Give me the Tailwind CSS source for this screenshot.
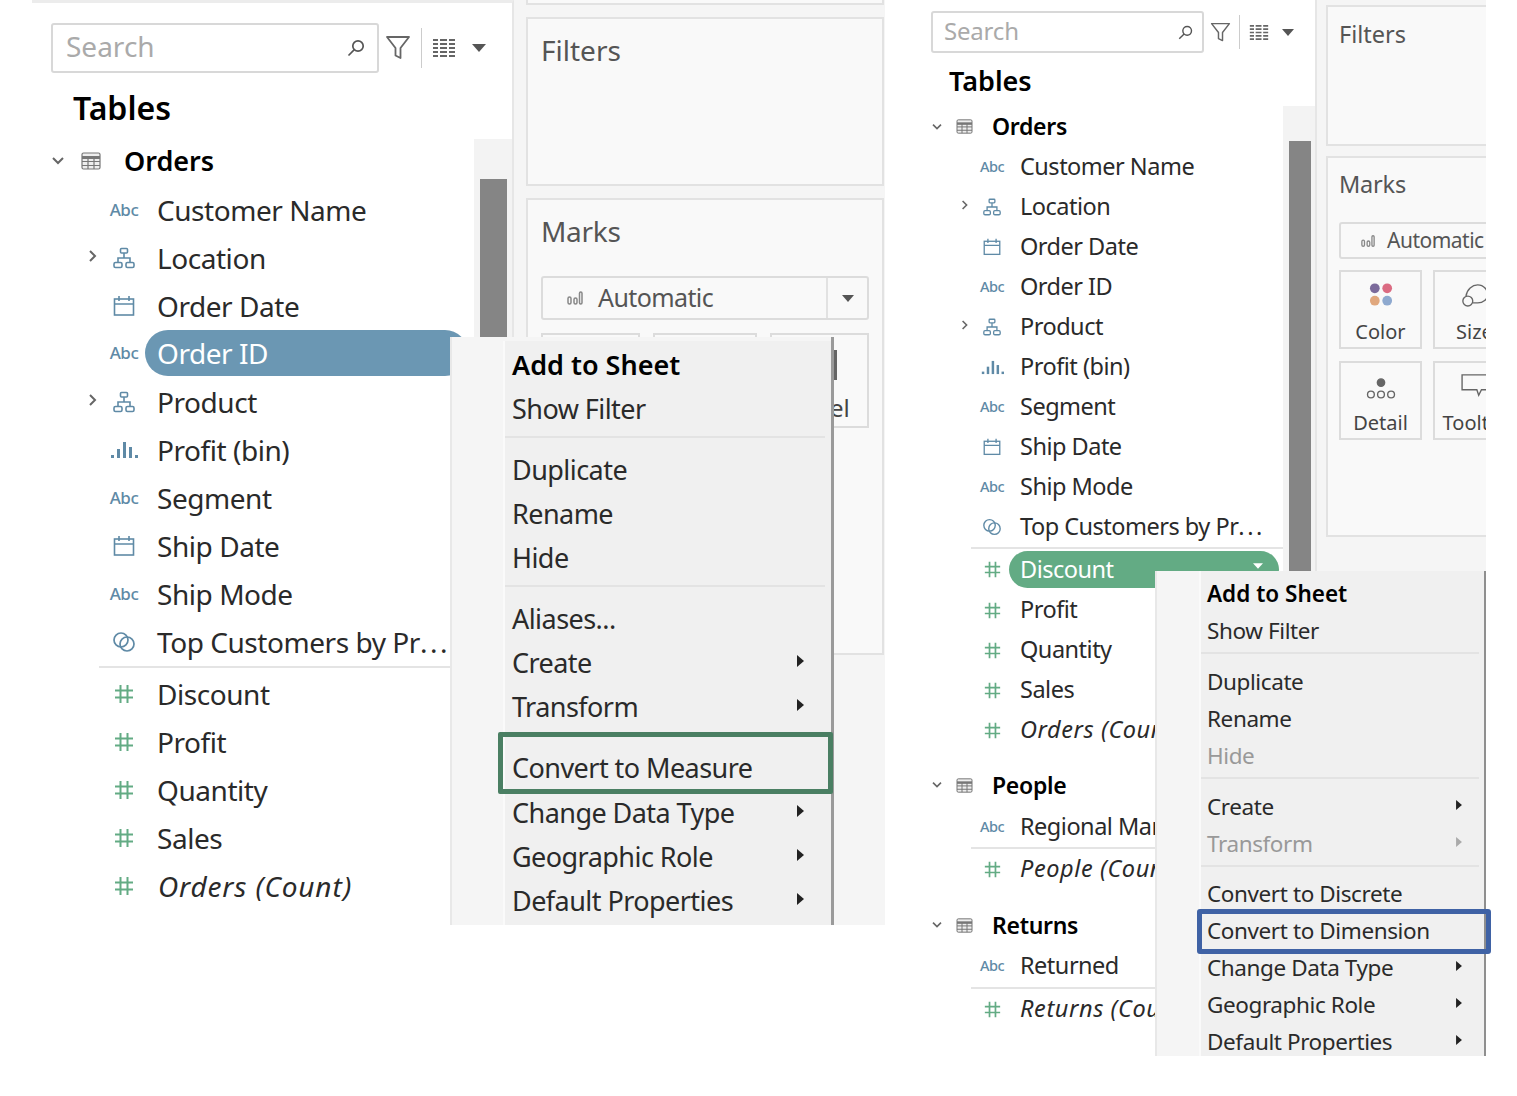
<!DOCTYPE html>
<html lang="en">
<head>
    <meta charset="UTF-8">
    <meta name="viewport" content="width=device-width, initial-scale=1.0">
    <title>Tableau data pane</title>
    <script src="https://cdn.jsdelivr.net/npm/@tailwindcss/browser@4"></script>
</head>
<body class="bg-white font-['Noto_Sans','Open_Sans',sans-serif] text-[#2a2a2a]">
<svg class="hidden">
    <symbol id="hier" viewBox="0 0 22 22" fill="none" stroke="currentColor" stroke-width="1.6"><rect x="7.5" y="1.5" width="7" height="4.5" rx="1"/><rect x="1" y="15.5" width="8" height="5" rx="1.5"/><rect x="13" y="15.5" width="8" height="5" rx="1.5"/><path d="M11 6v5M5 15v-4h12v4"/></symbol>
    <symbol id="cal" viewBox="0 0 22 22" fill="none" stroke="currentColor" stroke-width="1.6"><rect x="1.5" y="4" width="19" height="16"/><path d="M1.5 9h19M6 1v5M16 1v5"/></symbol>
    <symbol id="bins" viewBox="0 0 28 20" fill="currentColor"><rect x="1" y="15" width="3" height="3"/><rect x="7" y="9" width="3" height="9"/><rect x="13" y="2" width="3" height="16"/><rect x="19" y="7" width="3" height="11"/><rect x="25" y="15" width="3" height="3"/></symbol>
    <symbol id="sets" viewBox="0 0 24 22" fill="none" stroke="currentColor" stroke-width="1.7"><circle cx="9" cy="9" r="7"/><circle cx="15" cy="13" r="7"/></symbol>
    <symbol id="hash" viewBox="0 0 20 20" fill="none" stroke="currentColor" stroke-width="2"><path d="M6.5 1v18M13.5 1v18M1 6.5h18M1 13.5h18"/></symbol>
    <symbol id="table" viewBox="0 0 20 18" fill="none" stroke="#777" stroke-width="1.2"><rect x="1" y="1" width="18" height="16" rx="1.5" fill="#eee"/><path d="M1 5.5h18" stroke-width="3"/><path d="M1 9.5h18M1 13.5h18M7 5v12M13 5v12"/></symbol>
    <symbol id="down" viewBox="0 0 14 10" fill="none" stroke="#666" stroke-width="2"><path d="M2 2l5 5 5-5"/></symbol>
    <symbol id="right" viewBox="0 0 10 14" fill="none" stroke="#666" stroke-width="2"><path d="M2 2l5 5-5 5"/></symbol>
    <symbol id="search" viewBox="0 0 18 18" fill="none" stroke="#555" stroke-width="1.7"><circle cx="11" cy="7" r="5.2"/><path d="M7.3 10.7L1.5 16.5"/></symbol>
    <symbol id="funnel" viewBox="0 0 26 26" fill="none" stroke="#666" stroke-width="1.8" stroke-linejoin="round"><path d="M2 2h22l-8.5 11v10l-5-2.5V13z"/></symbol>
    <symbol id="list" viewBox="0 0 24 20" fill="#666"><path d="M1 1h5v2H1zM8 1h7v2H8zM17 1h6v2h-6zM1 5h5v2H1zM8 5h7v2H8zM17 5h6v2h-6zM1 9h5v2H1zM8 9h7v2H8zM17 9h6v2h-6zM1 13h5v2H1zM8 13h7v2H8zM17 13h6v2h-6zM1 17h5v2H1zM8 17h7v2H8zM17 17h6v2h-6z"/></symbol>
    <symbol id="caret" viewBox="0 0 14 8" fill="currentColor"><path d="M0 0h14L7 8z"/></symbol>
    <symbol id="marks" viewBox="0 0 16 16" fill="none" stroke="#888" stroke-width="1.5"><rect x="1" y="7" width="3" height="7" rx="1.5"/><rect x="7" y="8" width="3" height="6" rx="1.5"/><rect x="12.5" y="2" width="2.5" height="12" rx="1.2"/></symbol>
    <symbol id="arrow" viewBox="0 0 7 12" fill="currentColor"><path d="M0 0l7 6-7 6z"/></symbol>
    <symbol id="dots" viewBox="0 0 26 26"><circle cx="6" cy="6" r="5.5" fill="#7b6a9b"/><circle cx="20" cy="6" r="5.5" fill="#db6b82"/><circle cx="6" cy="20" r="5.5" fill="#e0a77d"/><circle cx="20" cy="20" r="5.5" fill="#8ea9cf"/></symbol>
    <symbol id="detail" viewBox="0 0 32 24" fill="none" stroke="#666" stroke-width="1.5"><circle cx="16" cy="5" r="4" fill="#666"/><circle cx="5" cy="18" r="3.7"/><circle cx="16" cy="18" r="3.7"/><circle cx="27" cy="18" r="3.7"/></symbol>
    <symbol id="size" viewBox="0 0 30 30" fill="none" stroke="#666" stroke-width="1.5"><circle cx="7" cy="20" r="5.5"/><path d="M5 14.500C6 7 12 2 18 2c7 0 11 6 11 11s-5 9-11 9h-5.500"/></symbol>
    <symbol id="tip" viewBox="0 0 30 26" fill="none" stroke="#666" stroke-width="1.5"><path d="M1 1h28v16H22l-3 6-2-6H1z"/></symbol>
</svg>

<main class="relative w-[1517px] h-[1096px] overflow-hidden">

    <!-- left shot: Order ID -> Convert to Measure -->
    <section class="absolute left-[32px] top-0 w-[853px] h-[925px] flex">
        <div class="w-[483px] h-full flex flex-col overflow-hidden border-t-[3px] border-[#ececec] border-r-[2px] border-r-[#e6e6e6]">
            <div class="h-[136px] shrink-0">
                <div class="flex items-center h-[50px] mt-[20px] ml-[19px]">
                    <div class="w-[328px] h-[50px] border-2 border-[#d8d8d8] rounded-[3px] flex items-center justify-between pl-[13px] pr-[12px]">
                        <span class="text-[28px] text-[#aaa] -mt-[4px]">Search</span>
                        <svg class="w-[18px] h-[18px]"><use href="#search"/></svg>
                    </div>
                    <svg class="w-[26px] h-[26px] ml-[6px]"><use href="#funnel"/></svg>
                    <span class="w-px h-[40px] bg-[#ccc] ml-[10px]"></span>
                    <svg class="w-[24px] h-[20px] ml-[10px]"><use href="#list"/></svg>
                    <svg class="w-[14px] h-[8px] ml-[16px] text-[#555]"><use href="#caret"/></svg>
                </div>
                <div class="ml-[41px] mt-[13px] text-[32px] leading-[44px] font-semibold text-black">Tables</div>
            </div>
            <div class="flex flex-1 min-h-0">
                <div class="w-[442px] shrink-0 text-[28px] tracking-[-0.45px]">
                    <div class="flex items-center h-[44px] mb-[3px] pl-[19px]">
                        <svg class="w-[14px] h-[10px]"><use href="#down"/></svg>
                        <svg class="w-[20px] h-[18px] ml-[16px]"><use href="#table"/></svg>
                        <span class="ml-[23px] font-semibold text-[27px] tracking-normal text-black">Orders</span>
                    </div>
                    <div class="flex items-center h-[48px] pl-[50px]"><span class="w-[24px]"></span><span class="w-[36px] text-center text-[17px] font-medium text-[#5f8aa6]">Abc</span><span class="ml-[15px]">Customer Name</span></div>
                    <div class="flex items-center h-[48px] pl-[50px]"><svg class="w-[10px] h-[14px] ml-[6px] mr-[8px] -mt-[4px]"><use href="#right"/></svg><span class="w-[36px] flex justify-center text-[#5f8aa6]"><svg class="w-[22px] h-[22px]"><use href="#hier"/></svg></span><span class="ml-[15px]">Location</span></div>
                    <div class="flex items-center h-[48px] pl-[50px]"><span class="w-[24px]"></span><span class="w-[36px] flex justify-center text-[#5f8aa6]"><svg class="w-[22px] h-[22px]"><use href="#cal"/></svg></span><span class="ml-[15px]">Order Date</span></div>
                    <div class="flex items-center h-[46px] mb-[2px] pl-[50px]"><span class="w-[24px]"></span><span class="w-[36px] text-center text-[17px] font-medium text-[#5f8aa6]">Abc</span><span class="ml-[3px] pl-[12px] w-[323px] shrink-0 h-[46px] leading-[46px] rounded-full bg-[#6b97b3] text-white">Order ID</span></div>
                    <div class="flex items-center h-[48px] pl-[50px]"><svg class="w-[10px] h-[14px] ml-[6px] mr-[8px] -mt-[4px]"><use href="#right"/></svg><span class="w-[36px] flex justify-center text-[#5f8aa6]"><svg class="w-[22px] h-[22px]"><use href="#hier"/></svg></span><span class="ml-[15px]">Product</span></div>
                    <div class="flex items-center h-[48px] pl-[50px]"><span class="w-[24px]"></span><span class="w-[36px] flex justify-center text-[#5f8aa6]"><svg class="w-[28px] h-[20px]"><use href="#bins"/></svg></span><span class="ml-[15px]">Profit (bin)</span></div>
                    <div class="flex items-center h-[48px] pl-[50px]"><span class="w-[24px]"></span><span class="w-[36px] text-center text-[17px] font-medium text-[#5f8aa6]">Abc</span><span class="ml-[15px]">Segment</span></div>
                    <div class="flex items-center h-[48px] pl-[50px]"><span class="w-[24px]"></span><span class="w-[36px] flex justify-center text-[#5f8aa6]"><svg class="w-[22px] h-[22px]"><use href="#cal"/></svg></span><span class="ml-[15px]">Ship Date</span></div>
                    <div class="flex items-center h-[48px] pl-[50px]"><span class="w-[24px]"></span><span class="w-[36px] text-center text-[17px] font-medium text-[#5f8aa6]">Abc</span><span class="ml-[15px]">Ship Mode</span></div>
                    <div class="flex items-center h-[48px] pl-[50px]"><span class="w-[24px]"></span><span class="w-[36px] flex justify-center text-[#5f8aa6]"><svg class="w-[24px] h-[22px]"><use href="#sets"/></svg></span><span class="ml-[15px] whitespace-nowrap">Top Customers by Pr<span class="tracking-[2.500px]">...</span></span></div>
                    <div class="h-[2px] ml-[67px] mb-[2px] bg-[#e4e4e4]"></div>
                    <div class="flex items-center h-[48px] pl-[50px]"><span class="w-[24px]"></span><span class="w-[36px] flex justify-center text-[#63ab84]"><svg class="w-[20px] h-[20px]"><use href="#hash"/></svg></span><span class="ml-[15px]">Discount</span></div>
                    <div class="flex items-center h-[48px] pl-[50px]"><span class="w-[24px]"></span><span class="w-[36px] flex justify-center text-[#63ab84]"><svg class="w-[20px] h-[20px]"><use href="#hash"/></svg></span><span class="ml-[15px]">Profit</span></div>
                    <div class="flex items-center h-[48px] pl-[50px]"><span class="w-[24px]"></span><span class="w-[36px] flex justify-center text-[#63ab84]"><svg class="w-[20px] h-[20px]"><use href="#hash"/></svg></span><span class="ml-[15px]">Quantity</span></div>
                    <div class="flex items-center h-[48px] pl-[50px]"><span class="w-[24px]"></span><span class="w-[36px] flex justify-center text-[#63ab84]"><svg class="w-[20px] h-[20px]"><use href="#hash"/></svg></span><span class="ml-[15px]">Sales</span></div>
                    <div class="flex items-center h-[48px] pl-[50px]"><span class="w-[24px]"></span><span class="w-[36px] flex justify-center text-[#63ab84]"><svg class="w-[20px] h-[20px]"><use href="#hash"/></svg></span><span class="ml-[16px] italic tracking-[0.850px]">Orders (Count)</span></div>
                </div>
                <div class="w-[39px] bg-[#f3f3f3] pt-[40px] pl-[6px]"><div class="w-[27px] h-[170px] bg-[#858585]"></div></div>
            </div>
        </div>
        <div class="flex-1 bg-[#f5f5f5] pl-[12px] pr-px flex flex-col">
            <div class="h-[5px] border-2 border-t-0 border-[#e2e2e2] bg-[#f9f9f9]"></div>
            <div class="h-[169px] mt-[12px] border-2 border-[#e2e2e2] bg-[#f9f9f9] px-[13px] pt-[10px] text-[28px] text-[#555]">Filters</div>
            <div class="h-[457px] mt-[12px] border-2 border-[#e2e2e2] bg-[#f9f9f9] px-[13px] pt-[10px]">
                <div class="text-[28px] tracking-[-0.3px] text-[#555]">Marks</div>
                <div class="flex items-center h-[44px] mt-[24px] border-2 border-[#dcdcdc] rounded-[3px] text-[25px] tracking-[-0.6px] text-[#555]">
                    <svg class="w-[16px] h-[16px] ml-[24px]"><use href="#marks"/></svg>
                    <span class="ml-[15px] flex-1">Automatic</span>
                    <span class="w-[41px] h-full border-l-2 border-[#e2e2e2] flex items-center justify-center"><svg class="w-[12px] h-[7px] text-[#555]"><use href="#caret"/></svg></span>
                </div>
                <div class="grid grid-cols-[99px_104px_99px] gap-[13px] mt-[13px]">
                    <div class="h-[95px] border-2 border-[#dcdcdc]"></div>
                    <div class="h-[95px] border-2 border-[#dcdcdc]"></div>
                    <div class="h-[95px] border-2 border-[#dcdcdc] flex flex-col items-center justify-end text-[24px] text-[#444]">
                        <span class="absolute left-[800px] top-[350px] w-[5px] h-[30px] bg-[#666]"></span>
                        Label
                    </div>
                </div>
            </div>
        </div>

        <div class="absolute left-[418px] top-[337px] w-[384px] h-[588px] bg-[#f5f5f5] border-l-2 border-r-[3px] border-[#e8e8e8] border-r-[#9a9a9a] pt-[4px] pl-[51px] text-[27px] tracking-[-0.55px]">
            <div class="bg-[#f0f0f0] h-full pt-[2px] pr-[6px] border-l-2 border-[#fafafa]">
                <div class="flex items-center justify-between h-[44px] pl-[7px] font-semibold tracking-normal text-black">Add to Sheet</div>
                <div class="flex items-center h-[44px] pl-[7px]">Show Filter</div>
                <div class="h-[17px] pt-[5px]"><div class="h-[2px] bg-[#e3e3e3]"></div></div>
                <div class="flex items-center h-[44px] pl-[7px]">Duplicate</div>
                <div class="flex items-center h-[44px] pl-[7px]">Rename</div>
                <div class="flex items-center h-[44px] pl-[7px]">Hide</div>
                <div class="h-[17px] pt-[5px]"><div class="h-[2px] bg-[#e3e3e3]"></div></div>
                <div class="flex items-center h-[44px] pl-[7px]">Aliases...</div>
                <div class="flex items-center justify-between h-[44px] pl-[7px] pr-[21px]">Create<svg class="w-[7px] h-[12px] -mt-[4px] text-[#222]"><use href="#arrow"/></svg></div>
                <div class="flex items-center justify-between h-[44px] pl-[7px] pr-[21px]">Transform<svg class="w-[7px] h-[12px] -mt-[4px] text-[#222]"><use href="#arrow"/></svg></div>
                <div class="h-[17px]"></div>
                <div class="relative flex items-center h-[45px] pl-[7px]">Convert to Measure
                    <span class="absolute -left-[7px] -top-[14px] w-[335px] h-[62px] border-[5px] border-[#4a7f63] rounded-[2px]"></span>
                </div>
                <div class="flex items-center justify-between h-[44px] pl-[7px] pr-[21px]">Change Data Type<svg class="w-[7px] h-[12px] -mt-[4px] text-[#222]"><use href="#arrow"/></svg></div>
                <div class="flex items-center justify-between h-[44px] pl-[7px] pr-[21px]">Geographic Role<svg class="w-[7px] h-[12px] -mt-[4px] text-[#222]"><use href="#arrow"/></svg></div>
                <div class="flex items-center justify-between h-[44px] pl-[7px] pr-[21px]">Default Properties<svg class="w-[7px] h-[12px] -mt-[4px] text-[#222]"><use href="#arrow"/></svg></div>
            </div>
        </div>
    </section>

    <!-- right shot: Discount -> Convert to Dimension -->
    <section class="absolute left-[915px] top-0 w-[571px] h-[1056px] flex">
        <div class="w-[402px] h-full flex flex-col overflow-hidden border-r-[2px] border-r-[#e6e6e6]">
            <div class="h-[106px] shrink-0">
                <div class="flex items-center h-[42px] mt-[11px] ml-[16px]">
                    <div class="w-[273px] h-[42px] border-2 border-[#d8d8d8] rounded-[3px] flex items-center justify-between pl-[11px] pr-[9px]">
                        <span class="text-[24px] tracking-[-0.2px] text-[#aaa] -mt-[2px]">Search</span>
                        <svg class="w-[15px] h-[15px]"><use href="#search"/></svg>
                    </div>
                    <svg class="w-[21px] h-[21px] ml-[6px]"><use href="#funnel"/></svg>
                    <span class="w-px h-[34px] bg-[#ccc] ml-[8px]"></span>
                    <svg class="w-[20px] h-[17px] ml-[9px]"><use href="#list"/></svg>
                    <svg class="w-[12px] h-[7px] ml-[13px] text-[#555]"><use href="#caret"/></svg>
                </div>
                <div class="ml-[34px] mt-[9px] text-[27px] leading-[38px] font-semibold text-black">Tables</div>
            </div>
            <div class="flex flex-1 min-h-0">
                <div class="w-[368px] shrink-0 text-[23.500px] tracking-[-0.5px]">
                    <div class="flex items-center h-[41px] pl-[16px]">
                        <svg class="w-[12px] h-[8px]"><use href="#down"/></svg>
                        <svg class="w-[17px] h-[15px] ml-[13px]"><use href="#table"/></svg>
                        <span class="ml-[19px] font-semibold text-[23px] tracking-[-0.3px] text-black">Orders</span>
                    </div>
                    <div class="flex items-center h-[40px] pl-[40px]"><span class="w-[20px]"></span><span class="w-[34px] text-center text-[14.500px] font-medium text-[#5f8aa6]">Abc</span><span class="ml-[11px]">Customer Name</span></div>
                    <div class="flex items-center h-[40px] pl-[40px]"><svg class="w-[8px] h-[12px] ml-[6px] mr-[6px] -mt-[4px]"><use href="#right"/></svg><span class="w-[34px] flex justify-center text-[#5f8aa6]"><svg class="w-[18px] h-[18px]"><use href="#hier"/></svg></span><span class="ml-[11px]">Location</span></div>
                    <div class="flex items-center h-[40px] pl-[40px]"><span class="w-[20px]"></span><span class="w-[34px] flex justify-center text-[#5f8aa6]"><svg class="w-[18px] h-[18px]"><use href="#cal"/></svg></span><span class="ml-[11px]">Order Date</span></div>
                    <div class="flex items-center h-[40px] pl-[40px]"><span class="w-[20px]"></span><span class="w-[34px] text-center text-[14.500px] font-medium text-[#5f8aa6]">Abc</span><span class="ml-[11px]">Order ID</span></div>
                    <div class="flex items-center h-[40px] pl-[40px]"><svg class="w-[8px] h-[12px] ml-[6px] mr-[6px] -mt-[4px]"><use href="#right"/></svg><span class="w-[34px] flex justify-center text-[#5f8aa6]"><svg class="w-[18px] h-[18px]"><use href="#hier"/></svg></span><span class="ml-[11px]">Product</span></div>
                    <div class="flex items-center h-[40px] pl-[40px]"><span class="w-[20px]"></span><span class="w-[34px] flex justify-center text-[#5f8aa6]"><svg class="w-[23px] h-[17px]"><use href="#bins"/></svg></span><span class="ml-[11px]">Profit (bin)</span></div>
                    <div class="flex items-center h-[40px] pl-[40px]"><span class="w-[20px]"></span><span class="w-[34px] text-center text-[14.500px] font-medium text-[#5f8aa6]">Abc</span><span class="ml-[11px]">Segment</span></div>
                    <div class="flex items-center h-[40px] pl-[40px]"><span class="w-[20px]"></span><span class="w-[34px] flex justify-center text-[#5f8aa6]"><svg class="w-[18px] h-[18px]"><use href="#cal"/></svg></span><span class="ml-[11px]">Ship Date</span></div>
                    <div class="flex items-center h-[40px] pl-[40px]"><span class="w-[20px]"></span><span class="w-[34px] text-center text-[14.500px] font-medium text-[#5f8aa6]">Abc</span><span class="ml-[11px]">Ship Mode</span></div>
                    <div class="flex items-center h-[40px] pl-[40px]"><span class="w-[20px]"></span><span class="w-[34px] flex justify-center text-[#5f8aa6]"><svg class="w-[20px] h-[18px]"><use href="#sets"/></svg></span><span class="ml-[11px] whitespace-nowrap">Top Customers by Pr<span class="tracking-[2.500px]">...</span></span></div>
                    <div class="h-[2px] ml-[56px] bg-[#e4e4e4]"></div>
                    <div class="flex items-center h-[40px] pl-[40px]"><span class="w-[20px]"></span><span class="w-[34px] flex justify-center text-[#63ab84]"><svg class="w-[17px] h-[17px]"><use href="#hash"/></svg></span><span class="pl-[11px] pr-[16px] w-[270px] shrink-0 h-[37px] leading-[37px] rounded-full bg-[#63ab84] text-white flex items-center justify-between">Discount<svg class="w-[10px] h-[6px] -mt-[6px] text-white"><use href="#caret"/></svg></span></div>
                    <div class="flex items-center h-[40px] mt-[1px] pl-[40px]"><span class="w-[20px]"></span><span class="w-[34px] flex justify-center text-[#63ab84]"><svg class="w-[17px] h-[17px]"><use href="#hash"/></svg></span><span class="ml-[11px]">Profit</span></div>
                    <div class="flex items-center h-[40px] pl-[40px]"><span class="w-[20px]"></span><span class="w-[34px] flex justify-center text-[#63ab84]"><svg class="w-[17px] h-[17px]"><use href="#hash"/></svg></span><span class="ml-[11px]">Quantity</span></div>
                    <div class="flex items-center h-[40px] pl-[40px]"><span class="w-[20px]"></span><span class="w-[34px] flex justify-center text-[#63ab84]"><svg class="w-[17px] h-[17px]"><use href="#hash"/></svg></span><span class="ml-[11px]">Sales</span></div>
                    <div class="flex items-center h-[40px] pl-[40px]"><span class="w-[20px]"></span><span class="w-[34px] flex justify-center text-[#63ab84]"><svg class="w-[17px] h-[17px]"><use href="#hash"/></svg></span><span class="ml-[11px] italic tracking-[0.6px] whitespace-nowrap">Orders (Count)</span></div>
                    <div class="flex items-center h-[40px] mt-[15px] mb-[2px] pl-[16px]">
                        <svg class="w-[12px] h-[8px]"><use href="#down"/></svg>
                        <svg class="w-[17px] h-[15px] ml-[13px]"><use href="#table"/></svg>
                        <span class="ml-[19px] font-semibold text-[23px] tracking-[-0.3px] text-black">People</span>
                    </div>
                    <div class="flex items-center h-[40px] pl-[40px]"><span class="w-[20px]"></span><span class="w-[34px] text-center text-[14.500px] font-medium text-[#5f8aa6]">Abc</span><span class="ml-[11px] whitespace-nowrap">Regional Manager</span></div>
                    <div class="h-[2px] ml-[56px] bg-[#e4e4e4]"></div>
                    <div class="flex items-center h-[40px] pl-[40px]"><span class="w-[20px]"></span><span class="w-[34px] flex justify-center text-[#63ab84]"><svg class="w-[17px] h-[17px]"><use href="#hash"/></svg></span><span class="ml-[11px] italic tracking-[0.6px] whitespace-nowrap">People (Count)</span></div>
                    <div class="flex items-center h-[40px] mt-[16px] mb-[1px] pl-[16px]">
                        <svg class="w-[12px] h-[8px]"><use href="#down"/></svg>
                        <svg class="w-[17px] h-[15px] ml-[13px]"><use href="#table"/></svg>
                        <span class="ml-[19px] font-semibold text-[23px] tracking-[-0.3px] text-black">Returns</span>
                    </div>
                    <div class="flex items-center h-[40px] pl-[40px]"><span class="w-[20px]"></span><span class="w-[34px] text-center text-[14.500px] font-medium text-[#5f8aa6]">Abc</span><span class="ml-[11px]">Returned</span></div>
                    <div class="h-[2px] ml-[56px] mt-[1px] bg-[#e4e4e4]"></div>
                    <div class="flex items-center h-[40px] pl-[40px]"><span class="w-[20px]"></span><span class="w-[34px] flex justify-center text-[#63ab84]"><svg class="w-[17px] h-[17px]"><use href="#hash"/></svg></span><span class="ml-[11px] italic tracking-[0.6px] whitespace-nowrap">Returns (Count)</span></div>
                </div>
                <div class="w-[32px] bg-[#f3f3f3] pt-[35px] pl-[6px]"><div class="w-[22px] h-[440px] bg-[#858585]"></div></div>
            </div>
        </div>
        <div class="flex-1 min-w-0 overflow-hidden bg-[#f5f5f5] pl-[9px] flex flex-col">
            <div class="w-[200px] h-[141px] mt-[5px] border-2 border-[#e2e2e2] bg-[#f9f9f9] px-[11px] pt-[10px] text-[23.500px] text-[#555]">Filters</div>
            <div class="w-[200px] h-[381px] mt-[10px] border-2 border-[#e2e2e2] bg-[#f9f9f9] px-[11px] pt-[9px]">
                <div class="text-[23.500px] tracking-[-0.2px] text-[#555]">Marks</div>
                <div class="flex items-center w-[200px] h-[37px] mt-[20px] border-2 border-[#dcdcdc] rounded-[3px] text-[21px] tracking-[-0.5px] text-[#555] whitespace-nowrap">
                    <svg class="w-[14px] h-[14px] ml-[20px]"><use href="#marks"/></svg>
                    <span class="ml-[12px]">Automatic</span>
                </div>
                <div class="grid grid-cols-[83px_83px] gap-x-[11px] gap-y-[12px] mt-[11px] text-[20px] text-[#444] whitespace-nowrap">
                    <div class="h-[79px] border-2 border-[#dcdcdc] flex flex-col items-center pt-[11px]"><svg class="w-[26px] h-[26px]"><use href="#dots"/></svg><span class="mt-[11px]">Color</span></div>
                    <div class="h-[79px] border-2 border-[#dcdcdc] flex flex-col items-center pt-[11px]"><svg class="w-[30px] h-[30px]"><use href="#size"/></svg><span class="mt-[7px]">Size</span></div>
                    <div class="h-[79px] border-2 border-[#dcdcdc] flex flex-col items-center pt-[15px]"><svg class="w-[32px] h-[24px]"><use href="#detail"/></svg><span class="mt-[8px]">Detail</span></div>
                    <div class="h-[79px] border-2 border-[#dcdcdc] flex flex-col items-center pt-[11px]"><svg class="w-[30px] h-[26px]"><use href="#tip"/></svg><span class="mt-[10px]">Tooltip</span></div>
                </div>
            </div>
        </div>

        <div class="absolute left-[240px] top-[571px] w-[331px] h-[485px] bg-[#f5f5f5] border-l-2 border-r-2 border-[#e8e8e8] border-r-[#8f8f8f] pl-[42px] text-[22.500px] tracking-[-0.4px]">
            <div class="bg-[#f0f0f0] h-full pt-[4px] pr-[5px] border-l-2 border-[#fafafa]">
                <div class="flex items-center h-[37px] pl-[6px] font-semibold tracking-normal text-black">Add to Sheet</div>
                <div class="flex items-center h-[37px] pl-[6px]">Show Filter</div>
                <div class="h-[14px] pt-[3px]"><div class="h-[2px] bg-[#e3e3e3]"></div></div>
                <div class="flex items-center h-[37px] pl-[6px]">Duplicate</div>
                <div class="flex items-center h-[37px] pl-[6px]">Rename</div>
                <div class="flex items-center h-[37px] pl-[6px] text-[#999]">Hide</div>
                <div class="h-[14px] pt-[3px]"><div class="h-[2px] bg-[#e3e3e3]"></div></div>
                <div class="flex items-center justify-between h-[37px] pl-[6px] pr-[17px]">Create<svg class="w-[6px] h-[10px] -mt-[4px] text-[#222]"><use href="#arrow"/></svg></div>
                <div class="flex items-center justify-between h-[37px] pl-[6px] pr-[17px] text-[#999]">Transform<svg class="w-[6px] h-[10px] -mt-[4px] text-[#aaa]"><use href="#arrow"/></svg></div>
                <div class="h-[13px] pt-[3px]"><div class="h-[2px] bg-[#e3e3e3]"></div></div>
                <div class="flex items-center h-[37px] pl-[6px]">Convert to Discrete</div>
                <div class="relative flex items-center h-[37px] pl-[6px]">Convert to Dimension
                    <span class="absolute -left-[4px] -top-[3px] w-[294px] h-[45px] border-[5px] border-[#3f62a5] rounded-[3px]"></span>
                </div>
                <div class="flex items-center justify-between h-[37px] pl-[6px] pr-[17px]">Change Data Type<svg class="w-[6px] h-[10px] -mt-[4px] text-[#222]"><use href="#arrow"/></svg></div>
                <div class="flex items-center justify-between h-[37px] pl-[6px] pr-[17px]">Geographic Role<svg class="w-[6px] h-[10px] -mt-[4px] text-[#222]"><use href="#arrow"/></svg></div>
                <div class="flex items-center justify-between h-[37px] pl-[6px] pr-[17px]">Default Properties<svg class="w-[6px] h-[10px] -mt-[4px] text-[#222]"><use href="#arrow"/></svg></div>
            </div>
        </div>
    </section>
</main>
</body>
</html>
